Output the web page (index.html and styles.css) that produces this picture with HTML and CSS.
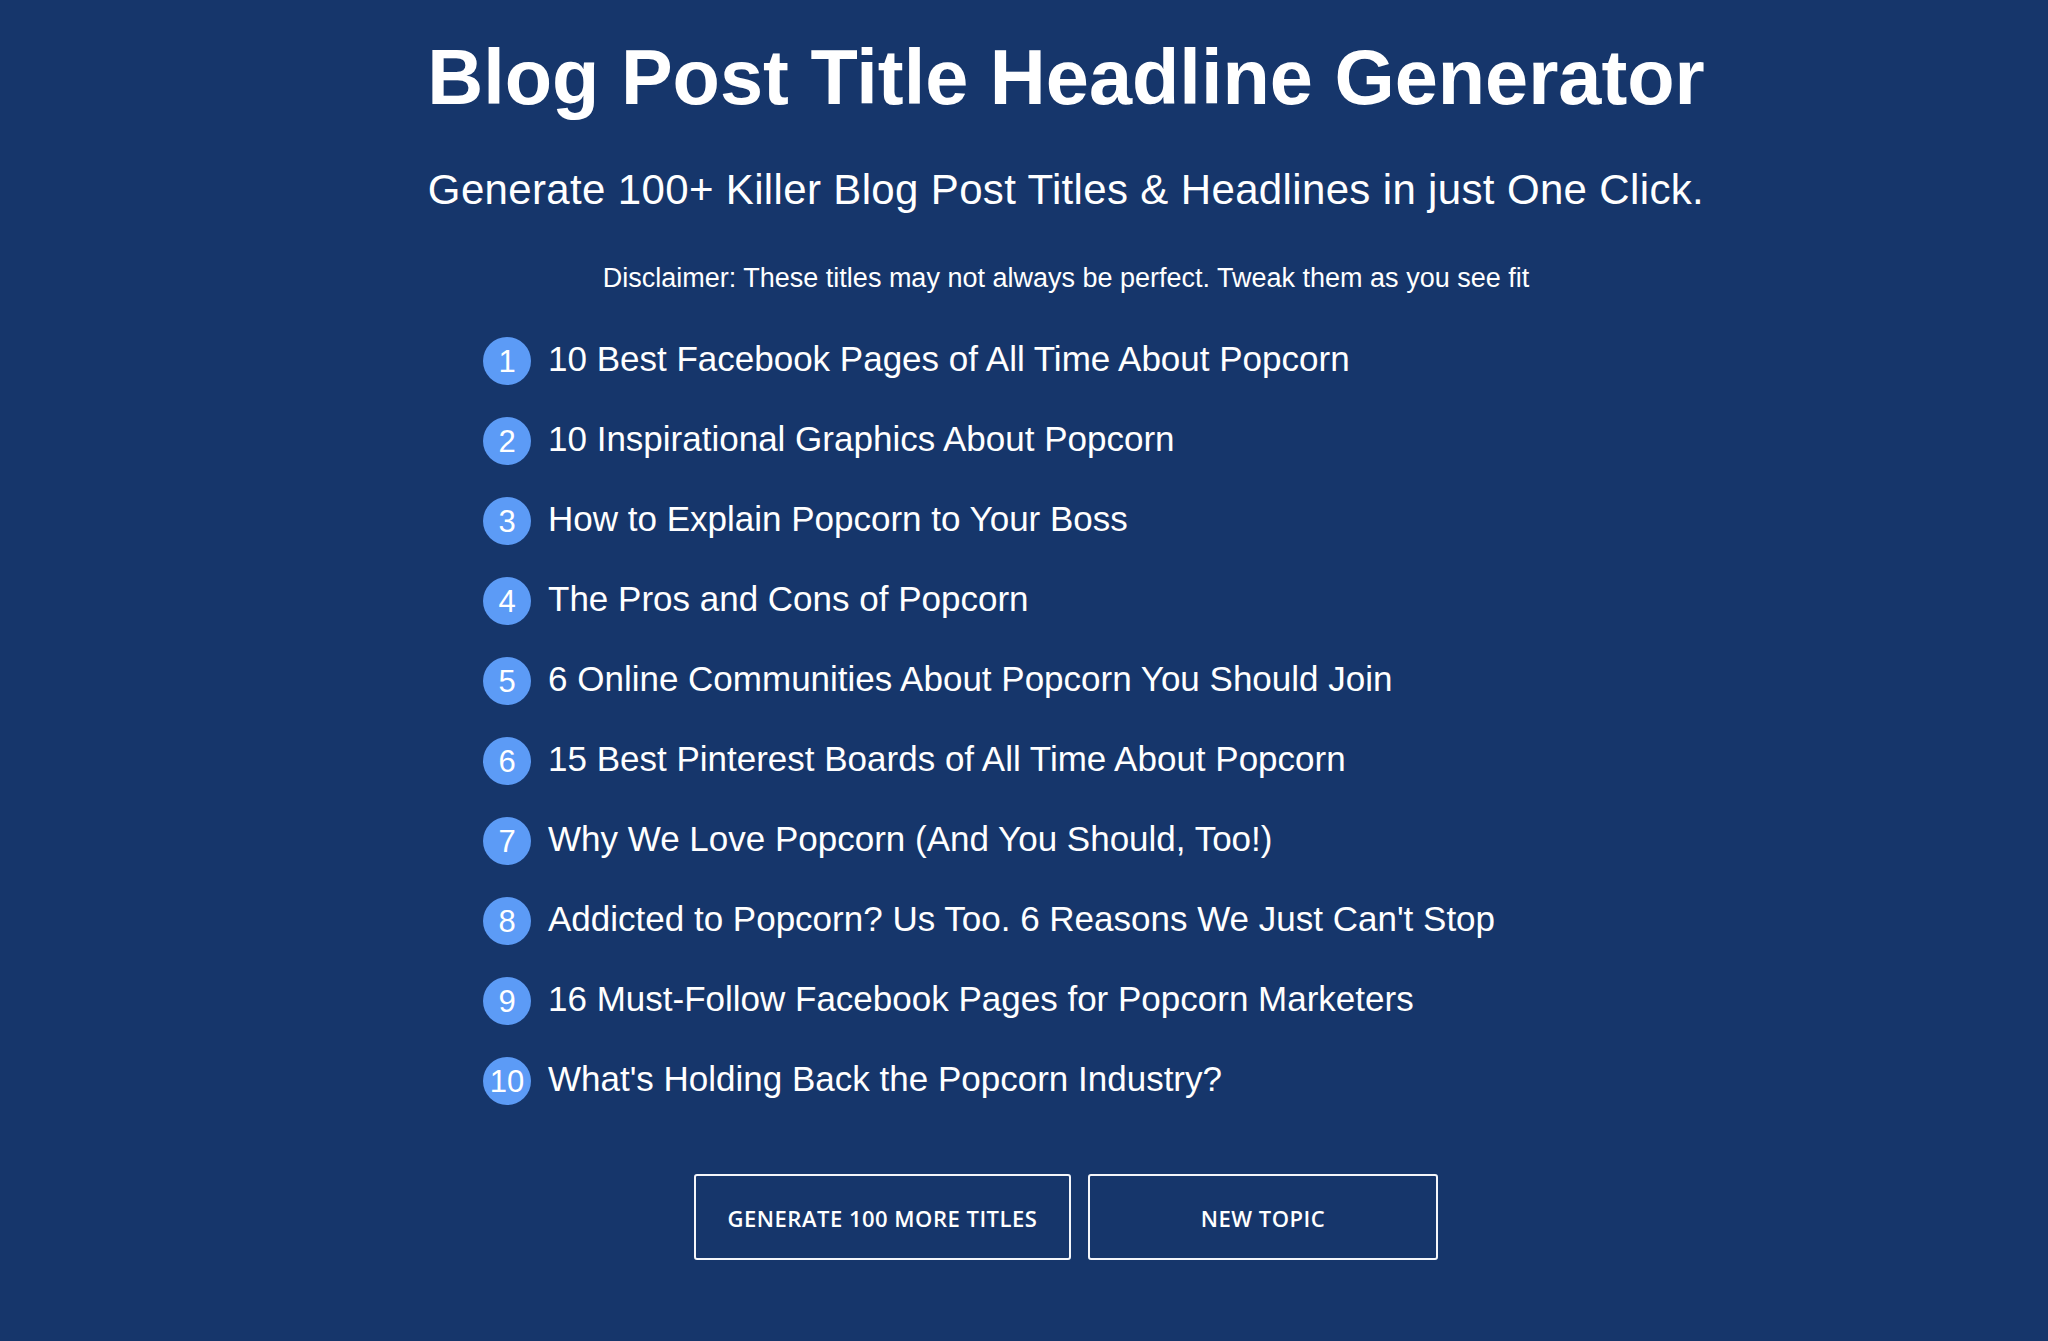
FILE: index.html
```html
<!DOCTYPE html>
<html lang="en">
<head>
<meta charset="utf-8">
<title>Blog Post Title Headline Generator</title>
<link rel="stylesheet" href="styles.css">
</head>
<body>
<main class="page">
  <header class="intro">
    <h1 class="headline">Blog Post Title Headline Generator</h1>
    <p class="tagline">Generate 100+ Killer Blog Post Titles &amp; Headlines in just One Click.</p>
    <p class="disclaimer">Disclaimer: These titles may not always be perfect. Tweak them as you see fit</p>
  </header>

  <ol class="titles">
    <li class="title-row"><span class="num">1</span><span class="title-text">10 Best Facebook Pages of All Time About Popcorn</span></li>
    <li class="title-row"><span class="num">2</span><span class="title-text">10 Inspirational Graphics About Popcorn</span></li>
    <li class="title-row"><span class="num">3</span><span class="title-text">How to Explain Popcorn to Your Boss</span></li>
    <li class="title-row"><span class="num">4</span><span class="title-text">The Pros and Cons of Popcorn</span></li>
    <li class="title-row"><span class="num">5</span><span class="title-text">6 Online Communities About Popcorn You Should Join</span></li>
    <li class="title-row"><span class="num">6</span><span class="title-text">15 Best Pinterest Boards of All Time About Popcorn</span></li>
    <li class="title-row"><span class="num">7</span><span class="title-text">Why We Love Popcorn (And You Should, Too!)</span></li>
    <li class="title-row"><span class="num">8</span><span class="title-text">Addicted to Popcorn? Us Too. 6 Reasons We Just Can't Stop</span></li>
    <li class="title-row"><span class="num">9</span><span class="title-text">16 Must-Follow Facebook Pages for Popcorn Marketers</span></li>
    <li class="title-row"><span class="num">10</span><span class="title-text">What's Holding Back the Popcorn Industry?</span></li>
  </ol>

  <div class="actions">
    <button class="btn btn-more" type="button">GENERATE 100 MORE TITLES</button>
    <button class="btn btn-topic" type="button">NEW TOPIC</button>
  </div>
</main>
</body>
</html>
```

FILE: styles.css
```css
html, body {
  margin: 0;
  padding: 0;
  background: #16366b;
}

body {
  min-height: 1341px;
  padding-left: 84px;
  color: #ffffff;
  font-family: "Liberation Sans", Arial, Helvetica, sans-serif;
}

.page {
  width: 1400px;
  margin: 0 auto;
}

.intro {
  text-align: center;
}

.headline {
  margin: 0;
  padding-top: 31px;
  font-size: 77.5px;
  font-weight: 700;
  line-height: 92px;
  white-space: nowrap;
}

.tagline {
  margin: 0;
  padding-top: 44px;
  font-size: 42px;
  letter-spacing: 0.35px;
  line-height: 46px;
  white-space: nowrap;
}

.disclaimer {
  margin: 0;
  padding-top: 50px;
  font-size: 27px;
  line-height: 30px;
}

.titles {
  list-style: none;
  margin: 0;
  padding: 42px 0 0 117px;
  display: flex;
  flex-direction: column;
  gap: 32px;
}

.title-row {
  display: flex;
  align-items: center;
  gap: 17px;
  height: 48px;
}

.num {
  flex: none;
  width: 48px;
  height: 48px;
  margin-top: 4px;
  border-radius: 50%;
  background: #5c9bf6;
  display: flex;
  align-items: center;
  justify-content: center;
  font-size: 31px;
  line-height: 1;
}

.title-text {
  font-size: 35px;
  line-height: 40px;
  white-space: nowrap;
}

.actions {
  display: flex;
  justify-content: center;
  gap: 17px;
  padding-top: 71px;
}

.btn {
  height: 86px;
  box-sizing: border-box;
  padding-top: 2px;
  background: transparent;
  border: 2px solid #f4f6fa;
  border-radius: 3px;
  color: #ffffff;
  font-family: "Open Sans", "Liberation Sans", sans-serif;
  font-weight: 600;
  font-size: 22px;
  letter-spacing: 0.5px;
  cursor: pointer;
}

.btn-more {
  width: 377px;
}

.btn-topic {
  width: 350px;
}
```
